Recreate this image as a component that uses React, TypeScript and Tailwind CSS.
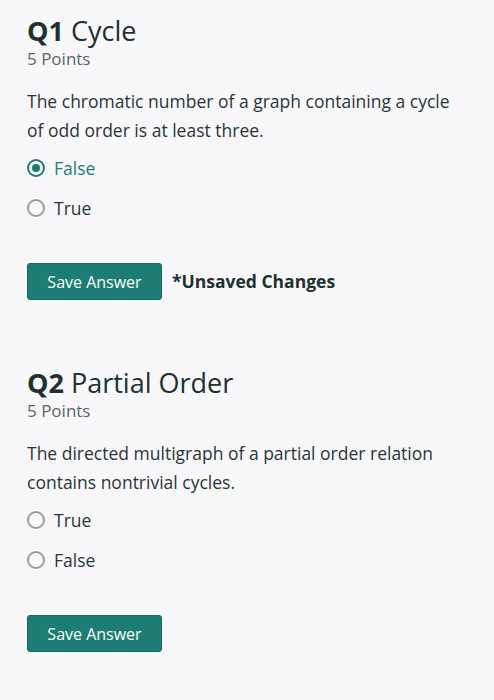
import React, { useState } from "react";

interface Question {
  num: string;
  title: string;
  points: string;
  prompt: string;
  options: string[];
  selected: string | null;
  unsaved: boolean;
}

const questions: Question[] = [
  {
    num: "Q1",
    title: "Cycle",
    points: "5 Points",
    prompt:
      "The chromatic number of a graph containing a cycle of odd order is at least three.",
    options: ["False", "True"],
    selected: "False",
    unsaved: true,
  },
  {
    num: "Q2",
    title: "Partial Order",
    points: "5 Points",
    prompt:
      "The directed multigraph of a partial order relation contains nontrivial cycles.",
    options: ["True", "False"],
    selected: null,
    unsaved: false,
  },
];

const Radio: React.FC<{ checked: boolean }> = ({ checked }) => (
  <span
    className={`flex items-center justify-center w-[18px] h-[18px] rounded-full border-2 ${
      checked ? "border-[#1d7d74]" : "border-[#9a9c9e]"
    }`}
  >
    {checked && <span className="w-[8px] h-[8px] rounded-full bg-[#1d7d74]" />}
  </span>
);

const QuestionBlock: React.FC<{ q: Question }> = ({ q }) => {
  const [selected, setSelected] = useState<string | null>(q.selected);

  return (
    <div className="flex flex-col">
      <h2 className="text-[27px] leading-[32px] text-[#22302f]">
        <span className="font-bold">{q.num}</span> {q.title}
      </h2>
      <div className="text-[17px] leading-[22px] text-[#5d6566] mt-[1px]">
        {q.points}
      </div>
      <p className="text-[17.5px] leading-[29px] text-[#2b3536] mt-[17px]">
        {q.prompt}
      </p>
      <div className="flex flex-col gap-[16px] mt-[11px]">
        {q.options.map((opt) => (
          <label
            key={opt}
            className="flex items-center gap-[9px] h-[24px] cursor-pointer"
            onClick={() => setSelected(opt)}
          >
            <Radio checked={selected === opt} />
            <span
              className={`text-[17.5px] ${
                selected === opt ? "text-[#1d7d74]" : "text-[#2b3536]"
              }`}
            >
              {opt}
            </span>
          </label>
        ))}
      </div>
      <div className="flex items-center gap-[10px] mt-[43px]">
        <button className="w-[135px] h-[37px] rounded-[3px] bg-[#1d7d74] border border-[#166a62] text-white text-[16px]">
          Save Answer
        </button>
        {q.unsaved && (
          <span className="font-bold text-[17.5px] text-[#22302f]">
            *Unsaved Changes
          </span>
        )}
      </div>
    </div>
  );
};

export default function App() {
  return (
    <div
      className="min-h-[700px] bg-[#f8f8fa] pl-[27px] pr-[27px] pt-[15px] flex flex-col gap-[67px]"
      style={{ fontFamily: "'Open Sans', Lato, sans-serif" }}
    >
      {questions.map((q) => (
        <QuestionBlock key={q.num} q={q} />
      ))}
    </div>
  );
}
